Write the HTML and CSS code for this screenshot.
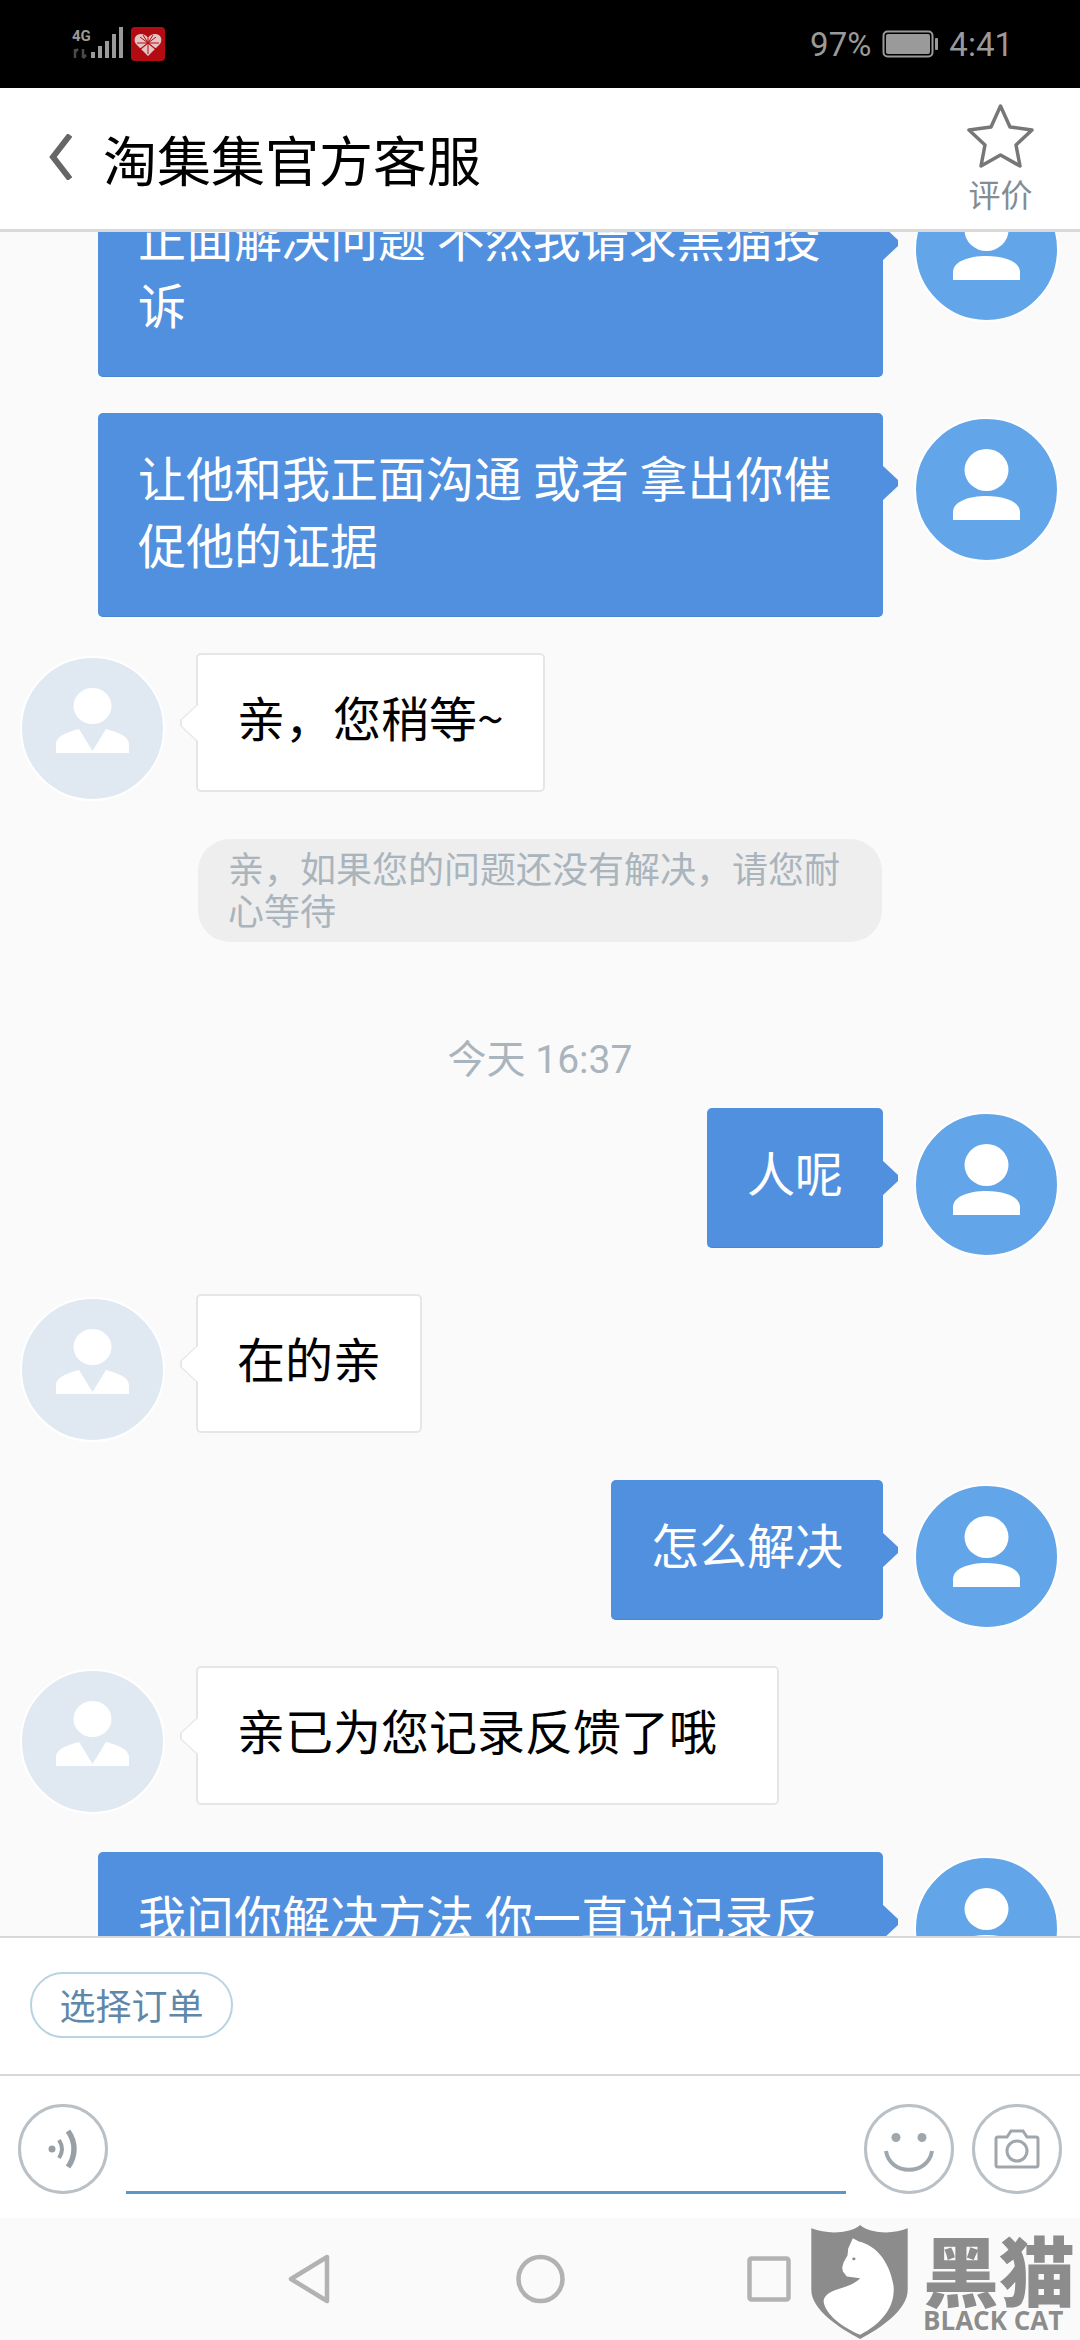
FILE: index.html
```html
<!DOCTYPE html>
<html lang="zh-CN">
<head>
<meta charset="utf-8">
<title>淘集集官方客服</title>
<link rel="stylesheet" href="styles.css">
</head>
<body>
<div class="phone">
  <div class="status">
    <div class="status-left">
      <svg class="signal" width="52" height="34" viewBox="0 0 52 34">
        <text x="0" y="14" class="net">4G</text>
        <path d="M3 22v9M6 22l-3 3M11 31v-9M11 31l3-3" class="arrows"/>
        <g class="bars">
          <rect x="19" y="25" width="4" height="6"/>
          <rect x="26" y="19" width="4" height="12"/>
          <rect x="33" y="14" width="4" height="17"/>
          <rect x="40" y="7" width="4" height="24"/>
          <rect x="47" y="0" width="4" height="31"/>
        </g>
      </svg>
      <svg class="app-icon" width="34" height="34" viewBox="0 0 34 34">
        <rect width="34" height="34" rx="4" fill="#b20c12"/>
        <path d="M17 29 5 17c-3-4-1-10 5-10 3 0 5 1 7 4 2-3 4-4 7-4 6 0 8 6 5 10z" fill="#e6c3c4"/>
        <path d="M9 10l16 12M25 10 9 22M17 11v16M6 16h22M12 8l5 8 5-8M10 22l7-6 7 6" stroke="#b20c12" stroke-width="1" fill="none"/>
      </svg>
    </div>
    <div class="status-right">
      <span>97%</span>
      <svg width="56" height="28" viewBox="0 0 56 28">
        <rect x="1.500" y="1.500" width="49" height="25" rx="4" fill="none" stroke="#9a9a9a" stroke-width="2"/>
        <rect x="4" y="4" width="44" height="20" rx="2" fill="#9a9a9a"/>
        <rect x="53" y="8" width="3" height="12" rx="1" fill="#9a9a9a"/>
      </svg>
      <span>4:41</span>
    </div>
  </div>

  <header class="header">
    <svg class="chevron" width="24" height="46" viewBox="0 0 24 46">
      <path d="M22 1 5 23l17 22" fill="none" stroke="#666" stroke-width="6"/>
    </svg>
    <h1 class="title">淘集集官方客服</h1>
    <div class="rate">
      <svg width="69" height="66" viewBox="0 0 69 66">
        <path d="M34.500 3 44 24l22 3-16 15 4 21-19.500-11L15 63l4-21L3 27l22-3z" fill="#fff" stroke="#777" stroke-width="3.500" stroke-linejoin="round"/>
      </svg>
      <span class="rate-label">评价</span>
    </div>
  </header>

  <main class="chat">
    <div class="list">
      <div class="row me tall">
        <div class="bubble blue">正面解决问题 不然我请求黑猫投诉</div>
        <svg class="avatar blue-av" viewBox="0 0 145 145"><circle cx="72.500" cy="72.500" r="71.500" class="av-bg"/><ellipse cx="72.500" cy="53" rx="22" ry="21" class="av-fg"/><path d="M39 103v-8c0-10 15-16 33.500-16S106 85 106 95v8z" class="av-fg"/></svg>
      </div>
      <div class="row me tall">
        <div class="bubble blue">让他和我正面沟通 或者 拿出你催促他的证据</div>
        <svg class="avatar blue-av" viewBox="0 0 145 145"><circle cx="72.500" cy="72.500" r="71.500" class="av-bg"/><ellipse cx="72.500" cy="53" rx="22" ry="21" class="av-fg"/><path d="M39 103v-8c0-10 15-16 33.500-16S106 85 106 95v8z" class="av-fg"/></svg>
      </div>
      <div class="row">
        <svg class="avatar pale-av" viewBox="0 0 145 145"><circle cx="72.500" cy="72.500" r="71.500" class="av-bg"/><ellipse cx="72.500" cy="50" rx="19" ry="18" class="av-fg"/><path d="M36 97v-9c0-8 12-12 23-15l13.500 22L86 73c11 3 23 7 23 15v9z" class="av-fg"/></svg>
        <div class="bubble white">亲，您稍等~</div>
      </div>
      <div class="notice">亲，如果您的问题还没有解决，请您耐心等待</div>
      <div class="time">今天 16:37</div>
      <div class="row me">
        <div class="bubble blue">人呢</div>
        <svg class="avatar blue-av" viewBox="0 0 145 145"><circle cx="72.500" cy="72.500" r="71.500" class="av-bg"/><ellipse cx="72.500" cy="53" rx="22" ry="21" class="av-fg"/><path d="M39 103v-8c0-10 15-16 33.500-16S106 85 106 95v8z" class="av-fg"/></svg>
      </div>
      <div class="row">
        <svg class="avatar pale-av" viewBox="0 0 145 145"><circle cx="72.500" cy="72.500" r="71.500" class="av-bg"/><ellipse cx="72.500" cy="50" rx="19" ry="18" class="av-fg"/><path d="M36 97v-9c0-8 12-12 23-15l13.500 22L86 73c11 3 23 7 23 15v9z" class="av-fg"/></svg>
        <div class="bubble white">在的亲</div>
      </div>
      <div class="row me">
        <div class="bubble blue">怎么解决</div>
        <svg class="avatar blue-av" viewBox="0 0 145 145"><circle cx="72.500" cy="72.500" r="71.500" class="av-bg"/><ellipse cx="72.500" cy="53" rx="22" ry="21" class="av-fg"/><path d="M39 103v-8c0-10 15-16 33.500-16S106 85 106 95v8z" class="av-fg"/></svg>
      </div>
      <div class="row">
        <svg class="avatar pale-av" viewBox="0 0 145 145"><circle cx="72.500" cy="72.500" r="71.500" class="av-bg"/><ellipse cx="72.500" cy="50" rx="19" ry="18" class="av-fg"/><path d="M36 97v-9c0-8 12-12 23-15l13.500 22L86 73c11 3 23 7 23 15v9z" class="av-fg"/></svg>
        <div class="bubble white wide">亲已为您记录反馈了哦</div>
      </div>
      <div class="row me">
        <div class="bubble blue">我问你解决方法 你一直说记录反馈</div>
        <svg class="avatar blue-av" viewBox="0 0 145 145"><circle cx="72.500" cy="72.500" r="71.500" class="av-bg"/><ellipse cx="72.500" cy="53" rx="22" ry="21" class="av-fg"/><path d="M39 103v-8c0-10 15-16 33.500-16S106 85 106 95v8z" class="av-fg"/></svg>
      </div>
    </div>
  </main>

  <div class="chips">
    <span class="chip">选择订单</span>
  </div>

  <div class="composer">
    <div class="round">
      <svg width="30" height="40" viewBox="0 0 30 40">
        <circle cx="4" cy="20" r="3.500" fill="#98a0a6"/>
        <path d="M11 11c4 6 4 12 0 18" fill="none" stroke="#98a0a6" stroke-width="4"/>
        <path d="M20 2c8 11 8 25 0 36" fill="none" stroke="#98a0a6" stroke-width="5.500"/>
      </svg>
    </div>
    <div class="field"></div>
    <div class="round">
      <svg width="56" height="50" viewBox="0 0 56 50">
        <circle cx="15" cy="13.500" r="4.500" fill="#a0a7ac"/>
        <circle cx="41" cy="13.500" r="4.500" fill="#a0a7ac"/>
        <path d="M5 27c4 25 42 25 46 0" fill="none" stroke="#a0a7ac" stroke-width="4"/>
      </svg>
    </div>
    <div class="round">
      <svg width="46" height="40" viewBox="0 0 46 40">
        <path d="M4 8h9l4-6h12l4 6h9a2 2 0 0 1 2 2v26a2 2 0 0 1-2 2H4a2 2 0 0 1-2-2V10a2 2 0 0 1 2-2z" fill="none" stroke="#a0a7ac" stroke-width="3"/>
        <circle cx="23" cy="22" r="10" fill="none" stroke="#a0a7ac" stroke-width="3"/>
      </svg>
    </div>
  </div>

  <nav class="nav">
    <svg width="46" height="50" viewBox="0 0 46 50">
      <path d="M39 3 3 25l36 22z" fill="none" stroke="#b2b2b2" stroke-width="4.500" stroke-linejoin="round"/>
    </svg>
    <svg width="49" height="50" viewBox="0 0 49 50">
      <circle cx="24.500" cy="25" r="22" fill="none" stroke="#b2b2b2" stroke-width="4.500"/>
    </svg>
    <svg width="44" height="46" viewBox="0 0 44 46">
      <rect x="2.500" y="2.500" width="39" height="41" rx="2" fill="none" stroke="#b2b2b2" stroke-width="4.500"/>
    </svg>
  </nav>

  <div class="mark">
    <svg width="97" height="114" viewBox="153 135 290 343">
      <path d="M153 145c50 20 120 15 147-10 27 25 97 30 143 10v185c0 60-80 115-143 148-63-33-147-88-147-148z" fill="#8c8c8c"/>
      <path d="M278 175l18 10c50 12 90 55 104 130 8 60-30 115-100 150-50-20-105-60-110-100 0-15 15-25 25-30 25-12 60-15 85-40l-40-5-12-15-2-12 4-15 12-22 2-20z" fill="#fff"/>
      <ellipse cx="281" cy="237" rx="5" ry="4" fill="#8c8c8c"/>
    </svg>
    <div class="mark-text">
      <span class="mark-cn">黑猫</span>
      <span class="mark-en">BLACK CAT</span>
    </div>
  </div>
</div>
</body>
</html>
```
FILE: styles.css
```css
* { box-sizing: border-box; }
html, body { margin: 0; padding: 0; }
body { font-family: "Noto Sans CJK SC", "Noto Sans", sans-serif; background: #fff; }

.phone {
  position: relative;
  width: 1080px;
  height: 2340px;
  display: flex;
  flex-direction: column;
  overflow: hidden;
  background: #fff;
}

/* status bar */
.status {
  height: 88px;
  flex: none;
  background: #000;
  display: flex;
  justify-content: space-between;
  align-items: center;
  padding: 0 67px 0 72px;
  color: #9a9a9a;
  font: 33px Roboto, sans-serif;
}
.status-left { display: flex; align-items: center; gap: 7px; }
.status-right { display: flex; align-items: center; gap: 11px; }
.net { font: bold 15px "Roboto", sans-serif; fill: #9a9a9a; }
.arrows { stroke: #4a4a4a; stroke-width: 2.500; fill: none; }
.bars { fill: #9a9a9a; }

/* header */
.header {
  height: 144px;
  flex: none;
  display: flex;
  align-items: center;
  padding: 0 45px 3px 48px;
  background: #fff;
  border-bottom: 3px solid #d9d9d9;
}
.chevron { flex: none; }
.title {
  margin: 0 0 0 31px;
  padding-top: 3px;
  flex: 1;
  font-size: 54px;
  font-weight: 400;
  line-height: 70px;
  color: #000;
}
.rate {
  width: 69px;
  display: flex;
  flex-direction: column;
  align-items: center;
  gap: 6px;
}
.rate-label { font-size: 32px; line-height: 36px; color: #838c93; white-space: nowrap; }

/* chat */
.chat {
  flex: 1;
  min-height: 0;
  overflow: hidden;
  background: #fafafa;
}
.list {
  margin-top: -59px;
  display: flex;
  flex-direction: column;
}
.row {
  display: flex;
  align-items: flex-start;
  gap: 31px;
  padding: 0 21px 0 20px;
  margin-bottom: 38px;
}
.row.me { justify-content: flex-end; margin-bottom: 37px; }
.row.tall { margin-bottom: 36px; }

.avatar { width: 145px; height: 145px; flex: none; margin-top: 3px; }
.me .avatar { margin-top: 4px; }
.av-fg { fill: #fff; }
.av-bg { stroke: #fff; stroke-width: 2; }
.blue-av .av-bg { fill: #62a5e8; }
.pale-av .av-bg { fill: #e0e9f1; }

.bubble {
  position: relative;
  max-width: 785px;
  min-height: 140px;
  font-size: 48px;
  line-height: 67px;
  padding: 30px 40px 39px;
  border-radius: 5px;
}
.bubble::after {
  content: "";
  position: absolute;
  top: 52px;
  width: 16px;
  height: 36px;
}
.blue {
  background: #5190df;
  color: #fff;
  border-bottom: 1px solid #4a86d0;
}
.blue::after {
  right: -15px;
  background: #5190df;
  clip-path: polygon(0 0, 100% 42%, 100% 58%, 0 100%);
}
.white {
  min-height: 139px;
  padding: 28px 39px 37px;
  background: #fff;
  color: #000;
  border: 2px solid #e6e6e6;
}
.white::before {
  content: "";
  position: absolute;
  top: 50px;
  left: -18px;
  width: 16px;
  height: 36px;
  background: #e8e8e8;
  clip-path: polygon(100% 0, 0 42%, 0 58%, 100% 100%);
}
.white::after {
  top: 50px;
  left: -16px;
  background: #fff;
  clip-path: polygon(100% 0, 0 42%, 0 58%, 100% 100%);
}
.white.wide { padding-right: 60px; }

.notice {
  margin: 0 0 0 198px;
  width: 684px;
  padding: 7px 30px 12px;
  background: #eeeeee;
  border-radius: 32px;
  font-size: 36px;
  line-height: 42px;
  color: #a9b4bd;
}
.time {
  margin: 96px 0 25px;
  text-align: center;
  font-size: 39px;
  line-height: 45px;
  color: #a9b4bd;
  font-family: Roboto, "Noto Sans CJK SC", sans-serif;
}

/* chips */
.chips {
  height: 140px;
  flex: none;
  padding: 34px 30px 0;
  border-top: 2px solid #d8d8d8;
  border-bottom: 2px solid #d8d8d8;
  background: #fff;
}
.chip {
  display: block;
  width: 203px;
  height: 66px;
  border: 2px solid #b8d3e2;
  border-radius: 33px;
  text-align: center;
  font-size: 36px;
  line-height: 60px;
  color: #5f87a9;
}

/* composer */
.composer {
  height: 142px;
  flex: none;
  display: flex;
  align-items: flex-start;
  gap: 18px;
  padding: 28px 0 0 18px;
  background: #fff;
}
.round {
  width: 90px;
  height: 90px;
  flex: none;
  border: 3px solid #b9c0c6;
  border-radius: 50%;
  display: flex;
  align-items: center;
  justify-content: center;
}
.field {
  width: 720px;
  height: 90px;
  flex: none;
  border-bottom: 3px solid #5b96c5;
}

/* nav */
.nav {
  height: 122px;
  flex: none;
  display: flex;
  align-items: center;
  gap: 182px;
  padding-left: 288px;
  background: #fafafa;
}

/* watermark */
.mark {
  position: absolute;
  left: 811px;
  top: 2225px;
  display: flex;
  gap: 15px;
  color: #8c8c8c;
}
.mark-text { display: flex; flex-direction: column; padding-top: 4px; }
.mark-cn { font-size: 76px; line-height: 78px; font-weight: 900; white-space: nowrap; }
.mark-en {
  font: bold 26px/26px "Open Sans", sans-serif;
  white-space: nowrap;
}
```
